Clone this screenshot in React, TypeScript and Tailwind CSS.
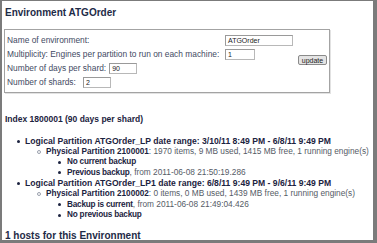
import React from "react";

const font = { fontFamily: '"Liberation Sans", Arial, sans-serif' };

function Disc() {
  return (
    <span className="flex w-[8px] shrink-0 items-center">
      <span className="block h-[3px] w-[3px] rounded-full bg-[#1c2340]" />
    </span>
  );
}
function Circle() {
  return (
    <span className="flex w-[9px] shrink-0 items-center">
      <span className="block h-[4px] w-[4px] rounded-full border border-[#9aa0ad]" />
    </span>
  );
}
function Square() {
  return (
    <span className="flex w-[9px] shrink-0 items-center">
      <span className="block h-[3px] w-[3px] rounded-full bg-[#1c2340]" />
    </span>
  );
}

function Field({ value, w }: { value: string; w: string }) {
  return (
    <div
      className={`flex h-[11px] items-center border border-[#b8b8b8] border-t-[#9a9a9a] border-l-[#9a9a9a] bg-white pl-[2px] text-[7px] leading-none text-[#222] ${w}`}
    >
      {value}
    </div>
  );
}

export default function App() {
  return (
    <div
      className="h-[243px] w-[377px] bg-[#7b7b7b] pb-[3px] pl-[2px] pr-[4px] pt-[1px]"
      style={font}
    >
      <div className="h-full w-full overflow-hidden bg-white pl-[2px]">
        <div className="pl-[1px] pt-[2px] text-[10px] font-bold leading-[20px] text-[#1e2b47]">
          Environment ATGOrder
        </div>
        <div className="mt-[6px] flex h-[64px] w-[326px] items-center border border-[#a3a3a3] pl-[2px] pr-[2px] text-[8.4px] text-[#3f4a63] shadow-[1px_1px_0_#e2e2e2]">
          <div className="flex flex-1 flex-col py-[3px]">
            <div className="flex h-[14px] items-center">
              <span className="w-[218px]">Name of environment:</span>
              <Field value="ATGOrder" w="w-[68px]" />
            </div>
            <div className="flex h-[14px] items-center">
              <span className="w-[218px]">
                Multiplicity: Engines per partition to run on each machine:
              </span>
              <Field value="1" w="w-[30px]" />
            </div>
            <div className="flex h-[14px] items-center">
              <span className="mr-[3px]">Number of days per shard:</span>
              <Field value="90" w="w-[28px]" />
            </div>
            <div className="flex h-[14px] items-center">
              <span className="mr-[7px]">Number of shards:</span>
              <Field value="2" w="w-[28px]" />
            </div>
          </div>
          <div className="mb-[2px] flex h-[10px] w-[29px] items-center justify-center rounded-[2px] border border-[#8a8a8a] bg-[#e4e4e4] text-[7px] leading-none text-[#222]">
            update
          </div>
        </div>

        <div className="mt-[20px] pl-[1px] text-[8.5px] font-bold leading-[12px] text-[#1c2340]">
          Index 1800001 (90 days per shard)
        </div>

        <div className="mt-[11px] text-[8.3px] leading-[10px] text-[#555b66]">
          <div className="flex pl-[13px]">
            <Disc />
            <span className="whitespace-nowrap text-[8.6px] font-bold text-[#1c2340]">
              Logical Partition ATGOrder_LP date range: 3/10/11 8:49 PM - 6/8/11 9:49 PM
            </span>
          </div>
          <div className="flex pl-[33px]">
            <Circle />
            <span className="whitespace-nowrap">
              <b className="text-[8.2px] text-[#1c2340]">Physical Partition 2100001</b>: 1970 items, 9 MB used, 1415 MB free, 1 running engine(s)
            </span>
          </div>
          <div className="flex pl-[54px]">
            <Square />
            <span className="text-[8.2px] font-bold tracking-[-0.2px] text-[#1c2340]">No current backup</span>
          </div>
          <div className="flex pl-[54px]">
            <Square />
            <span className="whitespace-nowrap">
              <b className="text-[8.2px] tracking-[-0.2px] text-[#1c2340]">Previous backup</b>, from 2011-06-08 21:50:19.286
            </span>
          </div>
          <div className="flex pl-[13px]">
            <Disc />
            <span className="whitespace-nowrap text-[8.6px] font-bold text-[#1c2340]">
              Logical Partition ATGOrder_LP1 date range: 6/8/11 9:49 PM - 9/6/11 9:49 PM
            </span>
          </div>
          <div className="flex pl-[33px]">
            <Circle />
            <span className="whitespace-nowrap">
              <b className="text-[8.2px] text-[#1c2340]">Physical Partition 2100002</b>: 0 items, 0 MB used, 1439 MB free, 1 running engine(s)
            </span>
          </div>
          <div className="flex pl-[54px]">
            <Square />
            <span className="whitespace-nowrap">
              <b className="text-[8.2px] tracking-[-0.2px] text-[#1c2340]">Backup is current</b>, from 2011-06-08 21:49:04.426
            </span>
          </div>
          <div className="flex pl-[54px]">
            <Square />
            <span className="text-[8.2px] font-bold tracking-[-0.2px] text-[#1c2340]">No previous backup</span>
          </div>
        </div>

        <div className="mt-[9px] pl-[1px] text-[10px] font-bold leading-[14px] text-[#1e2b47]">
          1 hosts for this Environment
        </div>
      </div>
    </div>
  );
}
